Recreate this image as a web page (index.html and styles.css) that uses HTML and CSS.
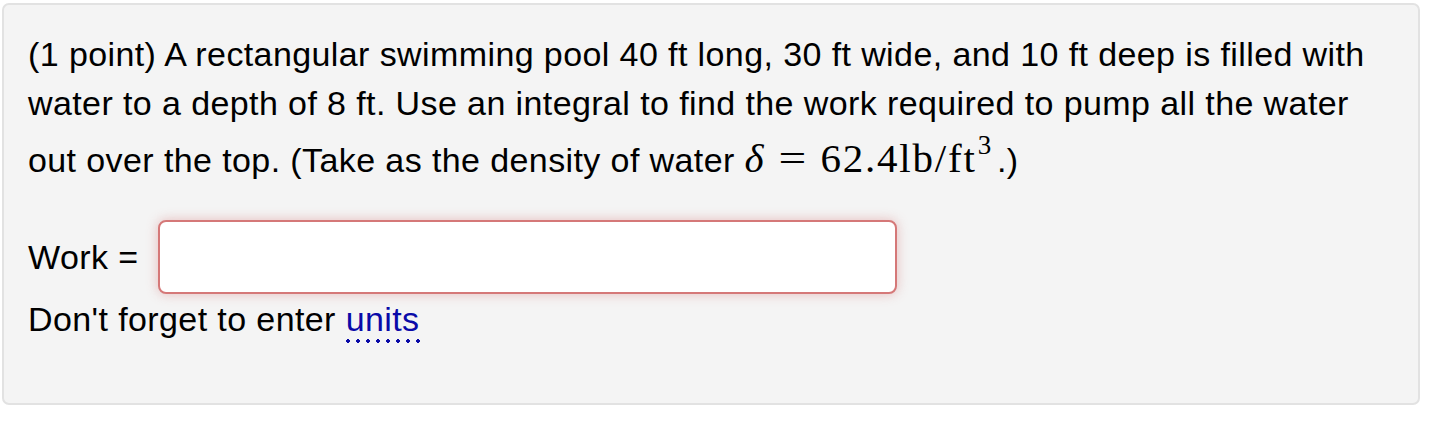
FILE: index.html
```html
<!DOCTYPE html>
<html>
<head>
<meta charset="utf-8">
<link rel="stylesheet" href="styles.css">
</head>
<body>
<div class="problem">
  <p class="text">(1 point) A rectangular swimming pool 40 ft long, 30 ft wide, and 10 ft deep is filled with water to a depth of 8 ft. Use an integral to find the work required to pump all the water out over the top. (Take as the density of water <span class="math"><i class="delta">δ</i><span class="eq">=</span>62.4lb/ft<sup class="sup">3</sup></span>.)</p>
  <div class="answer-row">
    <span class="label">Work =</span>
    <input class="answer" type="text">
  </div>
  <p class="note">Don't forget to enter <a class="units">units</a></p>
</div>
</body>
</html>
```
FILE: styles.css
```css
html, body {
  margin: 0;
  padding: 0;
  background: #fff;
}
body {
  padding: 3px 11px 0 2px;
  font-family: "Liberation Sans", Arial, sans-serif;
  font-size: 34px;
  letter-spacing: 0.4px;
  color: #000;
}
.problem {
  background: #f4f4f4;
  border: 2px solid #e2e2e2;
  border-radius: 7px;
  padding: 25px 24px 0 24px;
  box-sizing: border-box;
  height: 402px;
}
.text {
  margin: 0;
  line-height: 49px;
}
.math {
  display: inline-block;
  padding-top: 10px;
  font-family: "Liberation Serif", "Times New Roman", serif;
  font-size: 41px;
  line-height: 1;
  letter-spacing: 1.8px;
  white-space: nowrap;
}
.delta {
  font-style: italic;
  margin-right: 16px;
}
.eq {
  display: inline-block;
  transform: scaleX(1.2);
  margin-right: 14px;
}
.sup {
  font-size: 27px;
  line-height: 0;
  vertical-align: 18px;
  margin-left: 1px;
  margin-right: 4px;
}
.answer-row {
  display: flex;
  align-items: center;
  margin-top: 35px;
  line-height: 49px;
}
.label {
  margin-right: 20px;
}
.answer {
  width: 739px;
  height: 74px;
  box-sizing: border-box;
  border: 2px solid #d57878;
  border-radius: 8px;
  background: #fff;
  box-shadow: 0 0 12px rgba(213, 120, 120, 0.45);
  outline: none;
  margin: 0;
}
.note {
  margin: 1px 0 0 0;
  line-height: 49px;
}
.units {
  color: #0a0aa8;
  text-decoration: none;
  padding-bottom: 5px;
  background-image: radial-gradient(circle, #0a0aa8 1.7px, transparent 2px);
  background-size: 10px 4px;
  background-repeat: repeat-x;
  background-position: -3px 100%;
}
```
